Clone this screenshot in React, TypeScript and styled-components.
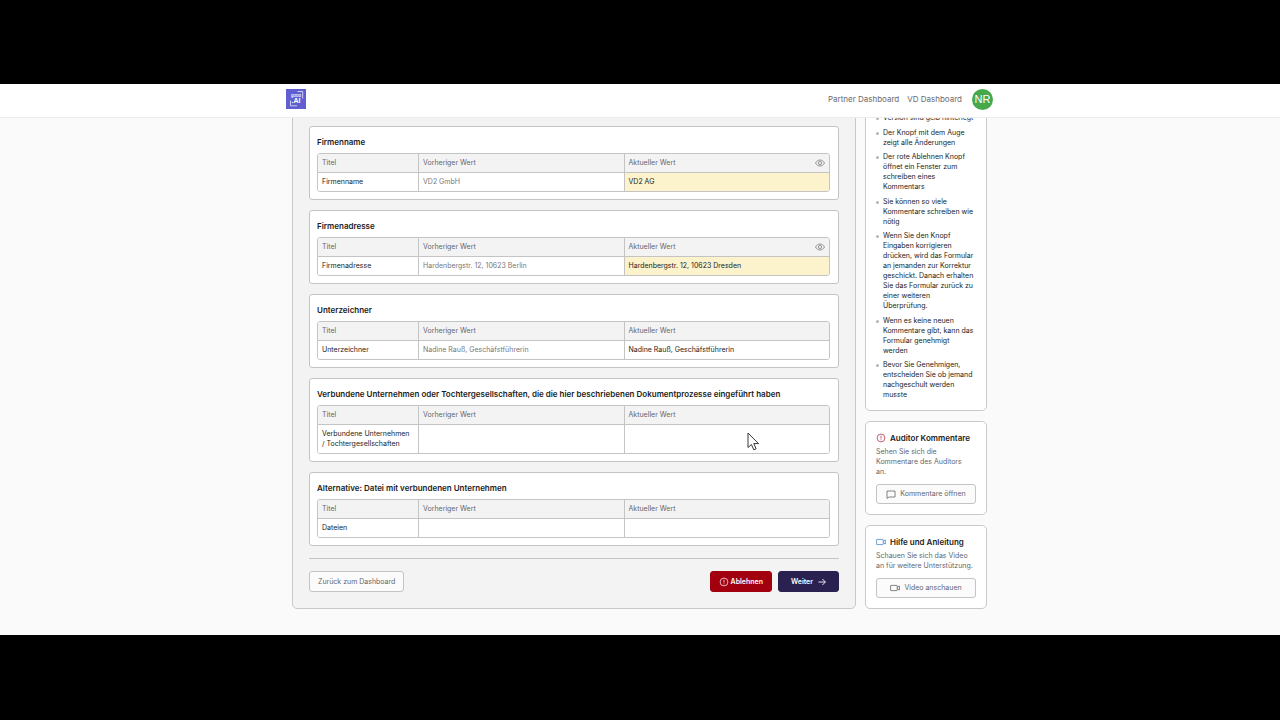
import React from 'react';
import styled, { createGlobalStyle, css } from 'styled-components';

const GlobalStyle = createGlobalStyle`
  *, *::before, *::after { box-sizing: border-box; }
  body {
    margin: 0;
    background: #000;
    color: #1c1c22;
    font-family: Inter, "Liberation Sans", sans-serif;
    font-size: 7px;
    line-height: 10px;
  }
`;

const Page = styled.div`
  min-height: 100vh;
  padding: 84px 0;
`;

const Screen = styled.div`
  background: #fafafa;
  overflow: hidden;
`;

const Header = styled.header`
  position: relative;
  z-index: 1;
  background: #fff;
  border-bottom: 1px solid #ececec;
`;

const HeaderInner = styled.div`
  display: flex;
  align-items: center;
  justify-content: space-between;
  max-width: 708px;
  height: 33px;
  margin: 0 auto;
  padding-bottom: 3px;
`;

const Nav = styled.nav`
  display: flex;
  align-items: center;
  gap: 8px;
`;

const NavLink = styled.a`
  color: #6b6b70;
  font-size: 8px;
  text-decoration: none;
`;

const Avatar = styled.button`
  width: 21px;
  height: 21px;
  margin: 0 1px 0 2px;
  padding: 0;
  border: 0;
  border-radius: 50%;
  background: #47a84b;
  color: #fff;
  font: 11px/21px "Liberation Sans", sans-serif;
`;

const Content = styled.main`
  position: relative;
  display: grid;
  grid-template-columns: minmax(0, 564px) 122px;
  gap: 9px;
  align-items: start;
  max-width: 696px;
  margin: -16px auto 0;
  padding-bottom: 26px;
`;

const Panel = styled.section`
  display: flex;
  flex-direction: column;
  gap: 10px;
  padding: 23px 16px 16px;
  border: 1px solid #c9c9c9;
  border-radius: 5px;
  background: #f3f3f3;
`;

const Group = styled.section`
  padding: 10px 8px 7px 7px;
  border: 1px solid #c4c4c4;
  border-radius: 3px;
  background: #fff;
`;

const GroupTitle = styled.h2`
  margin: 0 0 6px;
  font-size: 8px;
  font-weight: 600;
  line-height: 10px;
`;

const Table = styled.table`
  width: 100%;
  table-layout: fixed;
  border: 1px solid #c4c4c4;
  border-radius: 3px;
  border-collapse: separate;
  border-spacing: 0;
  overflow: hidden;
`;

const HeadCell = styled.th<{ $width?: string }>`
  width: ${(p) => p.$width ?? 'auto'};
  padding: 4px;
  background: #f3f3f3;
  border-bottom: 1px solid #c4c4c4;
  color: #66666c;
  text-align: left;
  font-weight: 400;
  & + & { border-left: 1px solid #c4c4c4; }
`;

const HeadRow = styled.div`
  display: flex;
  align-items: center;
  justify-content: space-between;
  height: 10px;
`;

const EyeButton = styled.button`
  display: flex;
  padding: 0;
  border: 0;
  background: none;
  color: #6b6b70;
`;

const Cell = styled.td<{ $tone?: 'muted' | 'changed' }>`
  padding: 4px;
  text-align: left;
  vertical-align: top;
  color: ${(p) => (p.$tone === 'muted' ? '#77777c' : '#1c1c22')};
  background: ${(p) => (p.$tone === 'changed' ? '#fcf3cd' : '#fff')};
  & + & { border-left: 1px solid #c4c4c4; }
`;

const Footer = styled.footer`
  display: flex;
  gap: 6px;
  margin-top: 2px;
  padding-top: 12px;
  border-top: 1px solid #c4c4c4;
`;

type Variant = 'plain' | 'danger' | 'primary';

const variants = {
  plain: css`
    border: 1px solid #c4c4c4;
    background: #fbfbfb;
    color: #66666c;
  `,
  danger: css`
    border: 1px solid #a3000f;
    background: #a3000f;
    color: #fff;
    font-weight: 600;
  `,
  primary: css`
    border: 1px solid #2a2150;
    background: #2a2150;
    color: #fff;
    font-weight: 600;
  `,
};

const Button = styled.button<{ $variant?: Variant; $gap?: number; $size?: 'small' | 'block' }>`
  display: flex;
  align-items: center;
  justify-content: center;
  gap: ${(p) => p.$gap ?? 4}px;
  width: ${(p) => (p.$size === 'block' ? '100%' : 'auto')};
  min-width: 61px;
  height: ${(p) => (p.$size === 'block' ? 20 : 21)}px;
  padding: 0 8px;
  border-radius: 3px;
  font-family: inherit;
  font-size: 7px;
  line-height: 10px;
  white-space: nowrap;
  ${(p) => variants[p.$variant ?? 'plain']}
`;

const Spacer = styled.div`
  flex: 1;
`;

const Sidebar = styled.aside`
  display: flex;
  flex-direction: column;
  gap: 10px;
`;

const Card = styled.section`
  padding: 10px;
  border: 1px solid #c9c9c9;
  border-radius: 5px;
  background: #fff;
`;

const Hints = styled.ul`
  margin: 0;
  padding: 0;
  list-style: none;
`;

const Hint = styled.li`
  position: relative;
  margin-top: 4px;
  padding-left: 7px;
  white-space: nowrap;
  &:nth-child(even) { margin-top: 5px; }
  &:first-child { margin-top: 0; }
  &::before {
    content: "";
    position: absolute;
    left: 0;
    top: 4px;
    width: 3px;
    height: 3px;
    border-radius: 50%;
    background: #b5b5b8;
  }
`;

const CardTitle = styled.h3`
  display: flex;
  align-items: center;
  gap: 4px;
  margin: 0 0 3px;
  font-size: 8px;
  font-weight: 600;
  line-height: 12px;
  white-space: nowrap;
`;

const CardText = styled.p`
  margin: 0 0 7px;
  color: #66666c;
  white-space: nowrap;
`;

const Pointer = styled.svg`
  position: absolute;
  left: 455px;
  top: 330px;
`;

const Logo = () => (
  <svg width="20" height="20" viewBox="0 0 20 20" role="img" aria-label="gobd.AI">
    <rect width="20" height="20" fill="#5f5fd0" />
    <path d="M11.500 2.500h5.200v7M4.500 11.500v5.300h6.500" fill="none" stroke="#d9d9fa" strokeWidth="0.9" />
    <text x="5" y="8.300" fill="#e6e6ff" fontFamily="Inter, sans-serif" fontSize="4" fontWeight="700">gobd</text>
    <text x="5.500" y="14" fill="#fff" fontFamily="Liberation Sans, sans-serif" fontSize="7" fontWeight="700">.AI</text>
  </svg>
);

const EyeIcon = () => (
  <svg width="10" height="8" viewBox="0 0 10 8" fill="none" stroke="currentColor" strokeWidth="0.7">
    <path d="M0.500 4C1.600 2 3.200 1 5 1s3.400 1 4.500 3C8.400 6 6.800 7 5 7S1.600 6 0.500 4z" />
    <circle cx="5" cy="4" r="1.600" />
  </svg>
);

const AlertIcon = ({ color = 'currentColor' }: { color?: string }) => (
  <svg width="10" height="10" viewBox="0 0 10 10" fill="none" stroke={color} strokeWidth="0.7">
    <circle cx="5" cy="5" r="3.900" />
    <path d="M5 2.700v3M5 6.400v0.900" />
  </svg>
);

const ArrowIcon = () => (
  <svg width="8" height="8" viewBox="0 0 8 8" fill="none" stroke="currentColor" strokeWidth="0.9">
    <path d="M0.500 4h6.800M4.400 1l3 3-3 3" />
  </svg>
);

const ChatIcon = () => (
  <svg width="10" height="9" viewBox="0 0 10 9" fill="none" stroke="currentColor" strokeWidth="0.8">
    <path d="M1 1h8v6H3L1 8.500z" strokeLinejoin="round" />
  </svg>
);

const VideoIcon = ({ color = 'currentColor' }: { color?: string }) => (
  <svg width="10" height="8" viewBox="0 0 10 8" fill="none" stroke={color} strokeWidth="0.8">
    <rect x="0.600" y="1.400" width="6.600" height="5.200" rx="0.400" />
    <path d="M7.300 3.200L9.400 2v4L7.300 4.800" />
  </svg>
);

interface GroupData {
  title: string;
  label: React.ReactNode;
  previous?: string;
  current?: string;
  changed?: boolean;
}

const groups: GroupData[] = [
  { title: 'Firmenname', label: 'Firmenname', previous: 'VD2 GmbH', current: 'VD2 AG', changed: true },
  {
    title: 'Firmenadresse',
    label: 'Firmenadresse',
    previous: 'Hardenbergstr. 12, 10623 Berlin',
    current: 'Hardenbergstr. 12, 10623 Dresden',
    changed: true,
  },
  {
    title: 'Unterzeichner',
    label: 'Unterzeichner',
    previous: 'Nadine Rauß, Geschäfstführerin',
    current: 'Nadine Rauß, Geschäfstführerin',
  },
  {
    title: 'Verbundene Unternehmen oder Tochtergesellschaften, die die hier beschriebenen Dokumentprozesse eingeführt haben',
    label: <>Verbundene Unternehmen<br />/ Tochtergesellschaften</>,
  },
  { title: 'Alternative: Datei mit verbundenen Unternehmen', label: 'Dateien' },
];

const hints: string[][] = [
  ['Version sind gelb hinterlegt'],
  ['Der Knopf mit dem Auge', 'zeigt alle Änderungen'],
  ['Der rote Ablehnen Knopf', 'öffnet ein Fenster zum', 'schreiben eines', 'Kommentars'],
  ['Sie können so viele', 'Kommentare schreiben wie', 'nötig'],
  [
    'Wenn Sie den Knopf', 'Eingaben korrigieren', 'drücken, wird das Formular', 'an jemanden zur Korrektur',
    'geschickt. Danach erhalten', 'Sie das Formular zurück zu', 'einer weiteren', 'Überprüfung.',
  ],
  ['Wenn es keine neuen', 'Kommentare gibt, kann das', 'Formular genehmigt', 'werden'],
  ['Bevor Sie Genehmigen,', 'entscheiden Sie ob jemand', 'nachgeschult werden', 'musste'],
];

const Lines = ({ items }: { items: string[] }) => (
  <>
    {items.map((line, i) => (
      <React.Fragment key={line}>
        {i > 0 && <br />}
        {line}
      </React.Fragment>
    ))}
  </>
);

const ComparisonGroup = ({ title, label, previous, current, changed }: GroupData) => (
  <Group>
    <GroupTitle>{title}</GroupTitle>
    <Table>
      <thead>
        <tr>
          <HeadCell scope="col" $width="100px">Titel</HeadCell>
          <HeadCell scope="col">Vorheriger Wert</HeadCell>
          <HeadCell scope="col">
            <HeadRow>
              Aktueller Wert
              {changed && <EyeButton type="button" aria-label="Änderungen anzeigen"><EyeIcon /></EyeButton>}
            </HeadRow>
          </HeadCell>
        </tr>
      </thead>
      <tbody>
        <tr>
          <Cell>{label}</Cell>
          <Cell $tone="muted">{previous}</Cell>
          <Cell $tone={changed ? 'changed' : undefined}>{current}</Cell>
        </tr>
      </tbody>
    </Table>
  </Group>
);

export default function App() {
  return (
    <Page>
      <GlobalStyle />
      <Screen>
        <Header>
          <HeaderInner>
            <Logo />
            <Nav>
              <NavLink href="#partner">Partner Dashboard</NavLink>
              <NavLink href="#vd">VD Dashboard</NavLink>
              <Avatar type="button">NR</Avatar>
            </Nav>
          </HeaderInner>
        </Header>
        <Content>
          <Panel>
            {groups.map((g) => <ComparisonGroup key={g.title} {...g} />)}
            <Footer>
              <Button type="button">Zurück zum Dashboard</Button>
              <Spacer />
              <Button type="button" $variant="danger" $gap={2}><AlertIcon />Ablehnen</Button>
              <Button type="button" $variant="primary" $gap={5}>Weiter<ArrowIcon /></Button>
            </Footer>
          </Panel>
          <Sidebar>
            <Card>
              <Hints>
                {hints.map((h) => <Hint key={h[0]}><Lines items={h} /></Hint>)}
              </Hints>
            </Card>
            <Card>
              <CardTitle><AlertIcon color="#a3203a" />Auditor Kommentare</CardTitle>
              <CardText><Lines items={['Sehen Sie sich die', 'Kommentare des Auditors', 'an.']} /></CardText>
              <Button type="button" $size="block"><ChatIcon />Kommentare öffnen</Button>
            </Card>
            <Card>
              <CardTitle><VideoIcon color="#4d86c6" />Hilfe und Anleitung</CardTitle>
              <CardText><Lines items={['Schauen Sie sich das Video', 'an für weitere Unterstützung.']} /></CardText>
              <Button type="button" $size="block"><VideoIcon />Video anschauen</Button>
            </Card>
          </Sidebar>
          <Pointer width="13" height="19" viewBox="0 0 13 19" aria-hidden="true">
            <path d="M1 1v14.500l3.400-3 2.400 5.300 2.300-1-2.300-5.200h4.700z" fill="#fff" stroke="#222" strokeWidth="0.9" />
          </Pointer>
        </Content>
      </Screen>
    </Page>
  );
}
